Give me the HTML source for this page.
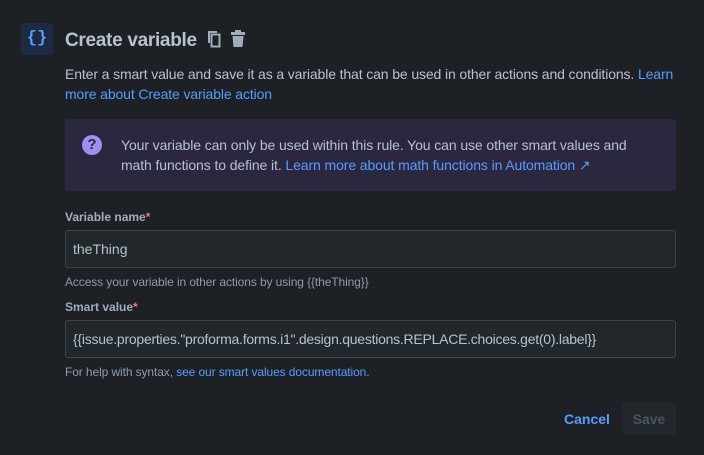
<!DOCTYPE html>
<html><head><style>
body{margin:0;width:704px;height:455px;background:#1d2125;font-family:"Liberation Sans",sans-serif;color:#b6c2cf;position:relative;overflow:hidden}
.a{position:absolute}
a,.l{color:#579dff;text-decoration:none}
.inp{position:absolute;left:65px;height:36px;background:#22272b;border:1px solid #3b444c;border-radius:3px;font-size:14px;line-height:36px;padding-left:7px;box-sizing:border-box;width:611px;color:#b6c2cf}
.lab{font-size:12px;font-weight:bold;color:#9fadbc}
.lab span{color:#f87168}
.help{font-size:12px;color:#8c9bab;letter-spacing:-0.1px}
</style></head><body>
<div class="a" style="left:21px;top:23px;width:32px;height:32px;background:#1c2b41;border-radius:3px;color:#579dff;font-size:17px;font-weight:bold;text-align:center;line-height:31px;font-family:'Liberation Mono',monospace">{}</div>
<div class="a" style="left:65px;top:30px;font-size:19px;letter-spacing:-0.3px;font-weight:bold;color:#b6c2cf">Create variable</div>
<svg class="a" style="left:207px;top:30px" width="16" height="18" viewBox="0 0 16 18"><rect x="4.5" y="4.5" width="8" height="12" fill="none" stroke="#9fadbc" stroke-width="2"/><path d="M2 13V2h8" fill="none" stroke="#9fadbc" stroke-width="2"/></svg>
<div class="a" style="left:230px;top:30px"><svg width="16" height="18" viewBox="0 0 16 18"><rect x="1" y="2" width="14" height="3" fill="#9fadbc"/><rect x="5" y="0" width="6" height="2" fill="#9fadbc"/><path d="M2.5 6h11l-1 11h-9z" fill="#9fadbc"/></svg></div>
<div class="a" style="left:65px;top:64px;width:618px;font-size:14px;line-height:20px;letter-spacing:-0.12px;color:#b6c2cf">Enter a smart value and save it as a variable that can be used in other actions and conditions. <a>Learn more about Create variable action</a></div>
<div class="a" style="left:65px;top:119px;width:611px;height:72px;background:#2b273f;border-radius:3px"></div>
<div class="a" style="left:82px;top:135px;width:20px;height:20px;border-radius:50%;background:#9f8fef;color:#2b273f;font-weight:bold;font-size:15px;text-align:center;line-height:20px">?</div>
<div class="a" style="left:121px;top:135px;width:530px;font-size:14px;line-height:20px;letter-spacing:-0.1px">Your variable can only be used within this rule. You can use other smart values and math functions to define it. <a>Learn more about math functions in Automation ↗</a></div>
<div class="a lab" style="left:65px;top:210px">Variable name<span>*</span></div>
<div class="inp" style="top:230px;height:38px;line-height:36px">theThing</div>
<div class="a help" style="left:65px;top:275px">Access your variable in other actions by using {{theThing}}</div>
<div class="a lab" style="left:65px;top:300px">Smart value<span>*</span></div>
<div class="inp" style="top:320px;height:38px;line-height:36px;letter-spacing:-0.25px">{{issue.properties."proforma.forms.i1".design.questions.REPLACE.choices.get(0).label}}</div>
<div class="a help" style="left:65px;top:365px">For help with syntax, <a>see our smart values documentation</a>.</div>
<div class="a" style="left:564px;top:411px;font-size:14px;font-weight:bold;color:#579dff">Cancel</div>
<div class="a" style="left:622px;top:403px;width:54px;height:32px;background:#22272b;border-radius:3px;font-size:14px;font-weight:bold;color:#4b5561;text-align:center;line-height:32px">Save</div>
</body></html>
